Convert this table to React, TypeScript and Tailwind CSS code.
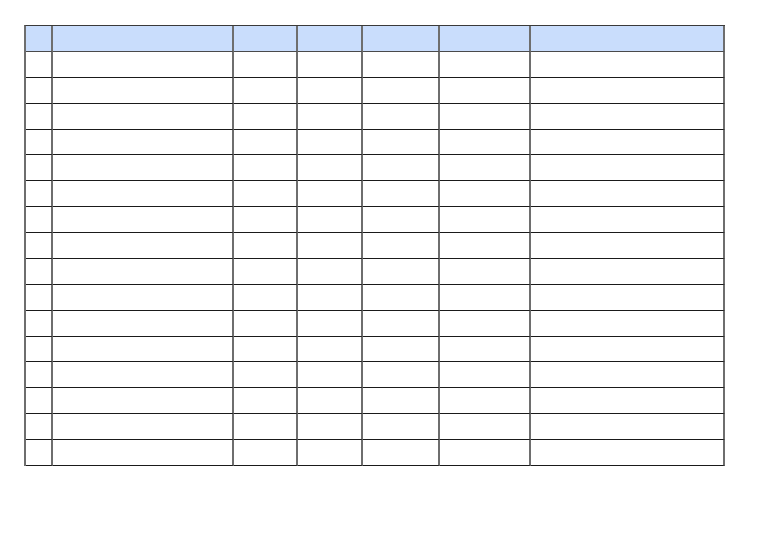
export default function App() {
  const cols = 7;
  const rows = 17;
  const cells = [];
  for (let r = 0; r < rows; r++) {
    for (let c = 0; c < cols; c++) {
      const header = r === 0;
      cells.push(
        <div
          key={`${r}-${c}`}
          className={
            (header ? "bg-[#c9ddfc] border-b-[#4a4a4a] " : "bg-white border-b-[#1a1a1a] ") +
            "border-b border-r-2 border-r-[#6e6e6e]"
          }
        />
      );
    }
  }
  return (
    <div className="w-[768px] h-[543px] bg-white pt-[25px] pl-[24px]" style={{ fontFamily: '"Liberation Sans", Arial, sans-serif' }}>
      <div className="grid grid-cols-[27px_181px_64px_65px_77px_91px_194px] grid-rows-[repeat(17,minmax(0,1fr))] h-[441px] w-fit border-t border-t-[#3a3a3a] border-l-2 border-l-[#6e6e6e]">
        {cells}
      </div>
    </div>
  );
}
